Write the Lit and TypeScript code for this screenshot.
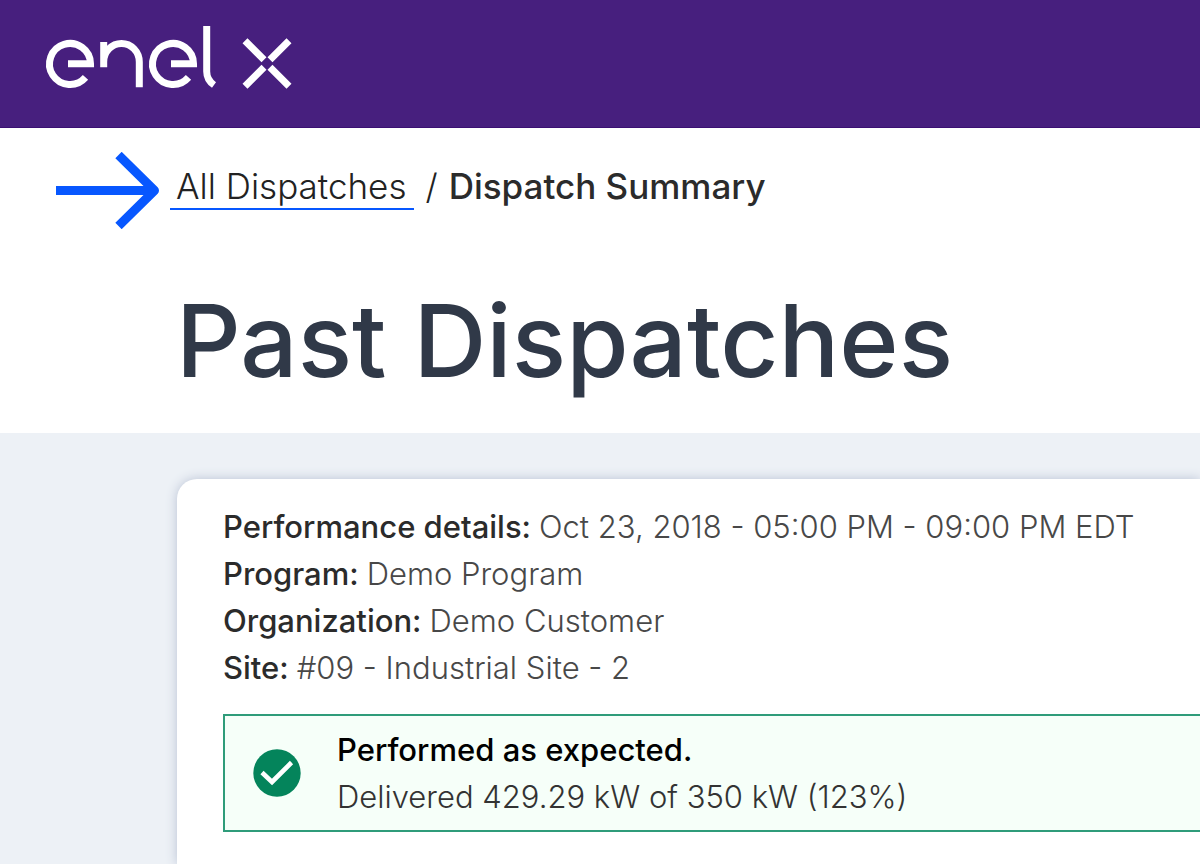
import { LitElement, html, css, svg } from "lit";
import { customElement, property } from "lit/decorators.js";

interface Detail {
  label: string;
  value: string;
}

@customElement("app-header")
class AppHeader extends LitElement {
  static styles = css`
    .bar {
      display: flex;
      box-sizing: border-box;
      height: 128px;
      padding: 20px 40px;
      background: #471f7e;
      border-bottom: 1px solid #3b1073;
    }
    .logo {
      display: block;
      width: 260px;
      height: 76px;
      fill: none;
      stroke: #fff;
      stroke-width: 7;
    }
  `;

  private letterE(x: number) {
    return svg`<path d="M${x - 2} 43.7H${x + 20.5}A20.5 20.5 0 1 0 ${x + 15.5} 57.4" />`;
  }

  render() {
    return html`
      <header class="bar">
        <svg class="logo" viewBox="0 0 260 76" role="img" aria-label="Enel X">
          ${this.letterE(30)}
          <path d="M63.7 22V47.3M63.7 42A17.8 18.5 0 0 1 99.3 42V67.3" />
          ${this.letterE(133)}
          <path d="M166.7 6V51.5C166.7 58 169 61.5 174 65" />
          <path d="M205 20.7L224 39.7M249 20.7L230 39.7M205 66.3L224 47.3M249 66.3L230 47.3" />
        </svg>
      </header>
    `;
  }
}

@customElement("status-banner")
class StatusBanner extends LitElement {
  @property() heading = "";
  @property() message = "";

  static styles = css`
    .banner {
      display: flex;
      align-items: center;
      gap: 36px;
      padding: 10px 28px;
      border: 2px solid #2f9c7a;
      border-right: 0;
      background: #f6fff9;
      color: #333;
      font-size: 31px;
      line-height: 47px;
      font-weight: 300;
    }
    .icon {
      flex: none;
      width: 48px;
      height: 48px;
    }
    .text {
      margin: 0;
    }
    .heading {
      display: block;
      color: #000;
      font-weight: 500;
    }
  `;

  render() {
    return html`
      <div class="banner" role="status">
        <svg class="icon" viewBox="0 0 48 48" aria-hidden="true">
          <circle cx="24" cy="24" r="23.7" fill="#04845b" />
          <path d="M9 23.5L19 33L38.5 13.5" fill="none" stroke="#fff" stroke-width="4.6" />
        </svg>
        <p class="text">
          <span class="heading">${this.heading}</span>
          ${this.message}
        </p>
      </div>
    `;
  }
}

@customElement("app-root")
class AppRoot extends LitElement {
  private details: Detail[] = [
    { label: "Performance details:", value: "Oct 23, 2018 - 05:00 PM - 09:00 PM EDT" },
    { label: "Program:", value: "Demo Program" },
    { label: "Organization:", value: "Demo Customer" },
    { label: "Site:", value: "#09 - Industrial Site - 2" },
  ];

  static styles = css`
    :host {
      display: flex;
      flex-direction: column;
      min-height: 100vh;
      background: #fff;
      font-family: Inter, "Liberation Sans", sans-serif;
      color: #333;
    }
    .intro {
      padding: 24px 40px 28px 56px;
    }
    .crumbs {
      display: flex;
      align-items: center;
      gap: 10px;
    }
    .trail {
      display: flex;
      align-items: baseline;
      gap: 11px;
      padding-bottom: 8px;
      font-size: 35px;
      line-height: 44px;
      font-weight: 300;
      color: #222;
      white-space: nowrap;
    }
    .arrow {
      flex: none;
      width: 104px;
      height: 77px;
      fill: none;
      stroke: #0757ff;
      stroke-width: 9;
    }
    .link {
      padding: 0 8px 0 6px;
      border-bottom: 2px solid #0757ff;
      color: inherit;
      text-decoration: none;
    }
    .current {
      font-weight: 500;
      color: #2b2b2b;
    }
    .title {
      margin: 46px 0 0 120px;
      font-size: 101px;
      line-height: 130px;
      font-weight: 500;
      color: #303948;
    }
    .content {
      flex: 1;
      display: flex;
      padding: 46px 0 0 177px;
      background: #edf1f6;
    }
    .card {
      flex: 1;
      min-width: 0;
      padding: 24px 0 32px 46px;
      border-radius: 20px 0 0 0;
      background: #fff;
      box-shadow: 0 0 12px #b9c2d4;
    }
    .details {
      margin: 0 0 23px;
      font-size: 31px;
      line-height: 47px;
    }
    .row {
      display: flex;
      gap: 8px;
      white-space: nowrap;
    }
    .label {
      font-weight: 500;
      color: #2b2b2b;
    }
    .value {
      margin: 0;
      font-weight: 300;
      color: #484848;
    }
  `;

  render() {
    return html`
      <app-header></app-header>
      <section class="intro">
        <nav class="crumbs" aria-label="Breadcrumb">
          <svg class="arrow" viewBox="0 0 104 77" aria-hidden="true">
            <path d="M0 38.5H98M62.5 3L98.5 38.5L62.5 74" stroke-linejoin="round" />
          </svg>
          <div class="trail">
            <a class="link" href="#dispatches">All Dispatches</a>
            <span>/</span>
            <span class="current" aria-current="page">Dispatch Summary</span>
          </div>
        </nav>
        <h1 class="title">Past Dispatches</h1>
      </section>
      <main class="content">
        <article class="card">
          <dl class="details">
            ${this.details.map(
              (d) => html`<div class="row">
                <dt class="label">${d.label}</dt>
                <dd class="value">${d.value}</dd>
              </div>`
            )}
          </dl>
          <status-banner
            heading="Performed as expected."
            message="Delivered 429.29 kW of 350 kW (123%)"
          ></status-banner>
        </article>
      </main>
    `;
  }
}
